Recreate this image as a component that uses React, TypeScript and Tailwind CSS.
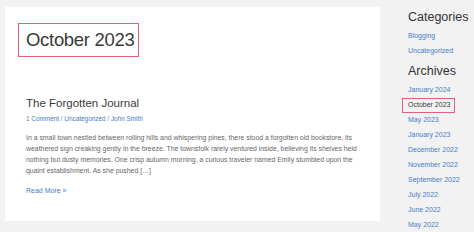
import React from 'react';

const Archive = () => {
  const categories = ["Blogging", "Uncategorized"];
  const archives = [
    "January 2024", "October 2023", "May 2023", "January 2023", "December 2022",
    "November 2022", "September 2022", "July 2022", "June 2022", "May 2022",
  ];

  return (
    <div className="w-[474px] h-[232px] overflow-hidden bg-[#f2f2f3] flex items-start font-['Liberation_Sans',Arial,sans-serif]">
      <main className="ml-[5px] mt-[7px] w-[375px] h-[214px] bg-white shrink-0 pt-[16px]">
        <div className="ml-[13px] w-[121px] h-[34px] border border-[#e2607a] flex items-center pl-[7px]">
          <h1 className="text-[18.5px] leading-none text-[#3a3a3a] tracking-[-0.3px]">October 2023</h1>
        </div>

        <article className="px-[21px] mt-[39px]">
          <h2 className="text-[11.5px] leading-[14px] text-[#3a3a3a]">The Forgotten Journal</h2>
          <div className="mt-[4px] text-[6.4px] leading-[10px] text-[#4580c8]">
            1 Comment / Uncategorized / John Smith
          </div>
          <p className="mt-[7.5px] text-[6.9px] leading-[11px] text-[#666] whitespace-nowrap">
            In a small town nestled between rolling hills and whispering pines, there stood a forgotten old bookstore, its<br />
            weathered sign creaking gently in the breeze. The townsfolk rarely ventured inside, believing its shelves held<br />
            nothing but dusty memories. One crisp autumn morning, a curious traveler named Emily stumbled upon the<br />
            quaint establishment. As she pushed [&hellip;]
          </p>
          <a className="block mt-[10.5px] text-[7px] leading-[10px] text-[#4580c8]">Read More &raquo;</a>
        </article>
      </main>

      <aside className="pl-[28px] pt-[9px] shrink-0">
        <h3 className="text-[12.5px] leading-[16px] font-medium text-[#333]">Categories</h3>
        <ul className="mt-[3.5px]">
          {categories.map((c) => (
            <li key={c} className="h-[15px] flex items-center text-[7px] text-[#4580c8]">{c}</li>
          ))}
        </ul>
        <h3 className="mt-[4.5px] text-[12.5px] leading-[16px] font-medium text-[#333]">Archives</h3>
        <ul className="mt-[3.5px]">
          {archives.map((a) => (
            <li
              key={a}
              className={
                a === "October 2023"
                  ? "h-[15px] -ml-[6px] w-[53px] pl-[5px] border border-[#e2607a] flex items-center text-[7px] text-[#3a3a3a]"
                  : "h-[15px] flex items-center text-[7px] text-[#4580c8]"
              }
            >
              {a}
            </li>
          ))}
        </ul>
      </aside>
    </div>
  );
};

export default Archive;
